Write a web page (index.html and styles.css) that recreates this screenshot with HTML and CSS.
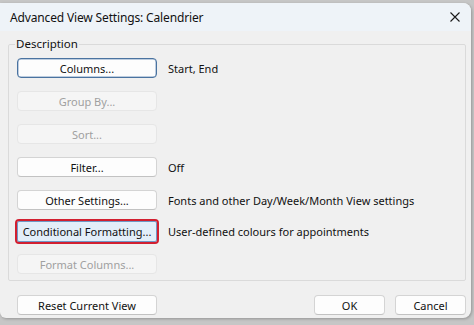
FILE: index.html
```html
<!DOCTYPE html>
<html>
<head>
<meta charset="utf-8">
<link rel="stylesheet" href="styles.css">
</head>
<body>
<div class="window">
  <div class="titlebar">
    <span class="title">Advanced View Settings: Calendrier</span>
    <span class="close">
      <svg width="10" height="10" viewBox="0 0 10 10"><path d="M0.5 0.5 L9.5 9.5 M9.5 0.5 L0.5 9.5" stroke="#1a1a1a" stroke-width="1.1" fill="none"/></svg>
    </span>
  </div>
  <div class="content">
    <fieldset class="group">
      <legend>Description</legend>
      <div class="row"><button class="btn default">Columns...</button><span class="desc">Start, End</span></div>
      <div class="row"><button class="btn disabled">Group By...</button></div>
      <div class="row"><button class="btn disabled">Sort...</button></div>
      <div class="row"><button class="btn">Filter...</button><span class="desc">Off</span></div>
      <div class="row"><button class="btn">Other Settings...</button><span class="desc">Fonts and other Day/Week/Month View settings</span></div>
      <div class="row"><button class="btn focused">Conditional Formatting...</button><span class="desc">User-defined colours for appointments</span></div>
      <div class="row"><button class="btn disabled">Format Columns...</button></div>
    </fieldset>
    <div class="footer">
      <button class="btn">Reset Current View</button>
      <div class="actions">
        <button class="btn small">OK</button>
        <button class="btn small">Cancel</button>
      </div>
    </div>
  </div>
</div>
</body>
</html>
```

FILE: styles.css
```css
html, body {
  margin: 0;
  padding: 0;
}
body {
  background: #c6c6c6;
  width: 474px;
  height: 325px;
  overflow: hidden;
  font-family: "Noto Sans", "Open Sans", sans-serif;
  font-size: 11px;
  color: #111;
}
.window {
  margin-top: 3px;
  width: 471px;
  height: 315px;
  background: #f0f0f0;
  border-radius: 0 8px 8px 6px;
  overflow: hidden;
  box-shadow: 1px 1px 3px rgba(0,0,0,0.25);
}
.titlebar {
  height: 28px;
  background: #eef3f8;
  display: flex;
  align-items: center;
  justify-content: space-between;
  padding: 0 11px 0 10px;
}
.title {
  font-size: 12px;
  letter-spacing: -0.15px;
}
.close {
  display: flex;
}
.content {
  padding: 6px 0 0 8px;
  width: 458px;
}
.group {
  margin: 0;
  padding: 7px 0 0 8px;
  border: 1px solid #dadada;
  border-radius: 2px;
  height: 244px;
  box-sizing: border-box;
}
.group legend {
  padding: 0 1px;
  margin-left: -2px;
  line-height: 14px;
  font-size: 11.5px;
}
.row {
  display: flex;
  align-items: center;
  height: 20px;
  margin-bottom: 13px;
}
.row:nth-child(7) {
  margin-top: -2px;
}
.btn {
  font-family: inherit;
  font-size: 11px;
  color: #111;
  width: 140px;
  height: 20px;
  padding: 0;
  background: #fdfdfd;
  border: 1px solid #d4d4d4;
  border-bottom-color: #c2c2c2;
  border-radius: 4px;
}
.btn.default {
  border: 1px solid #4a73a0;
  box-shadow: inset 0 0 0 0.5px #7e9dc2;
}
.btn.disabled {
  background: #f5f5f5;
  border-color: #e6e6e6;
  color: #a0a0a0;
}
.btn.focused {
  background: #e3eef9;
  border: 1px solid #6f98c6;
  outline: 2px solid #d21f30;
  outline-offset: 0;
  border-radius: 2px;
  height: 21px;
}
.desc {
  margin-left: 11px;
}
.footer {
  display: flex;
  justify-content: space-between;
  align-items: center;
  margin-top: 14px;
  padding-left: 9px;
  width: 458px;
  box-sizing: border-box;
}
.actions {
  display: flex;
  gap: 10px;
}
.btn.small {
  width: 71px;
}
```
